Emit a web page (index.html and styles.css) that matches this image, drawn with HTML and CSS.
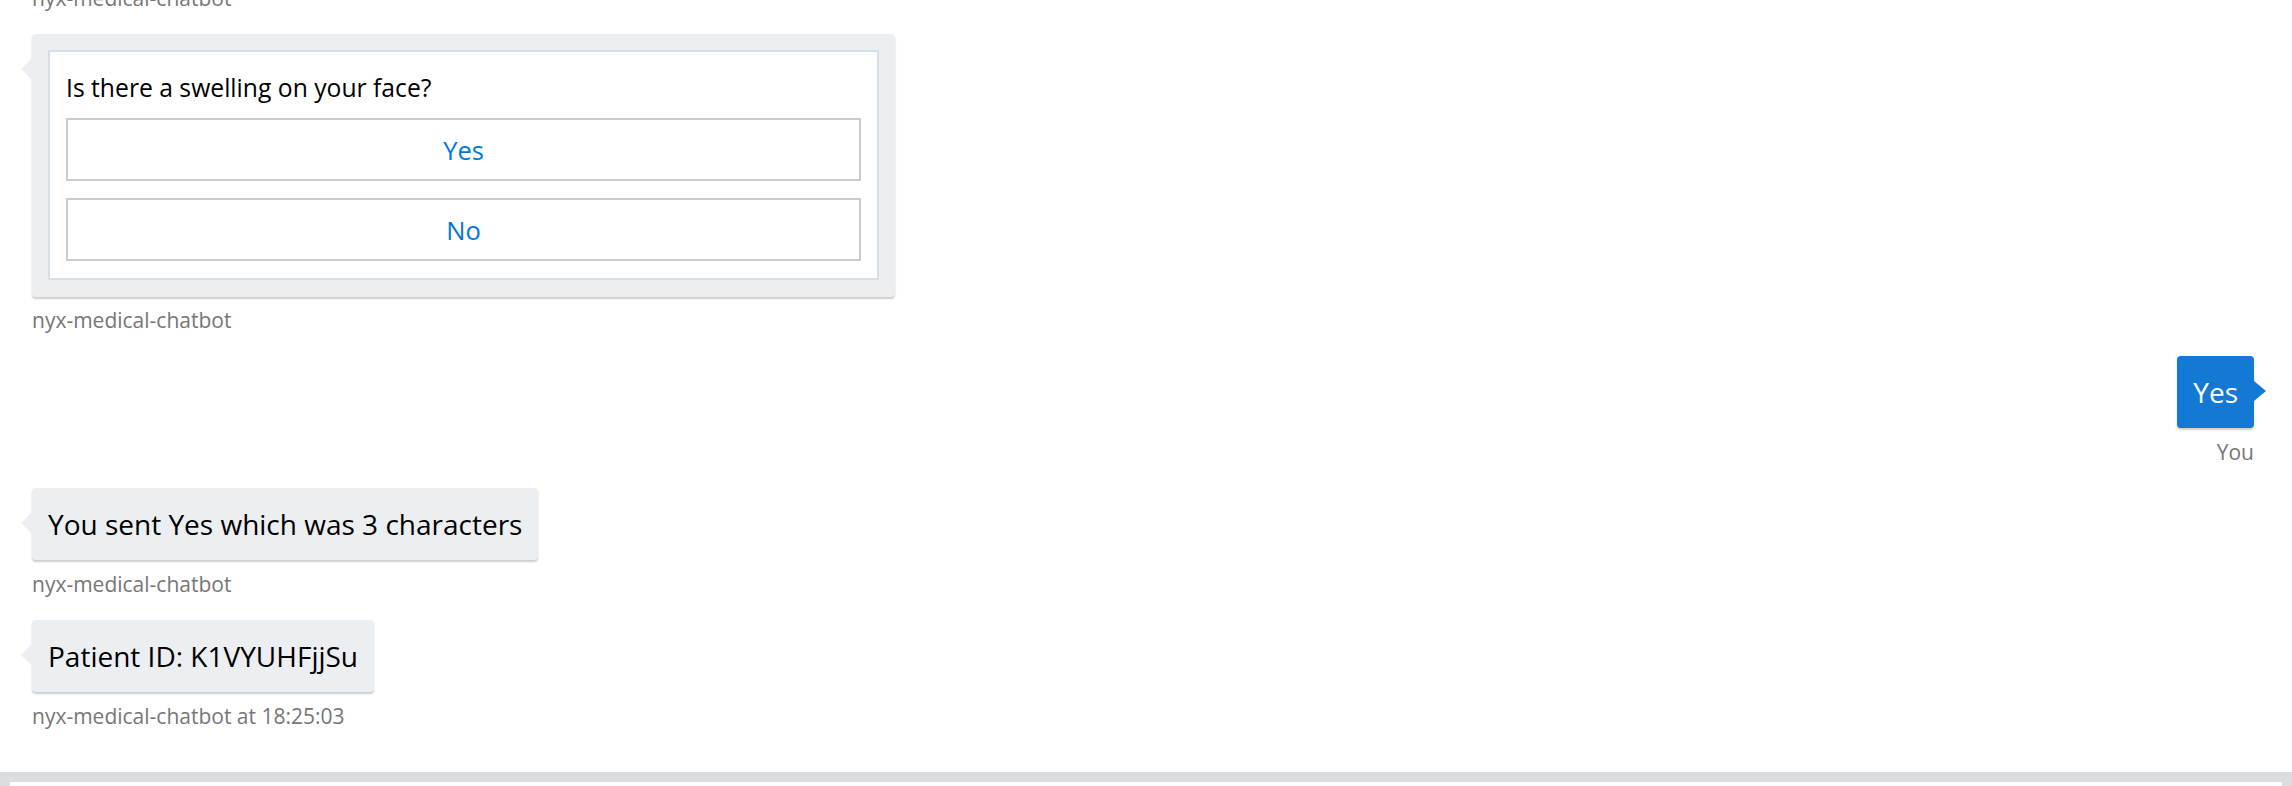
FILE: index.html
```html
<!DOCTYPE html>
<html lang="en">
<head>
<meta charset="utf-8">
<title>nyx-medical-chatbot</title>
<link rel="stylesheet" href="styles.css">
</head>
<body>
<div class="chat">
  <div class="messages">
    <div class="msg bot">
      <div class="from">nyx-medical-chatbot</div>
    </div>
    <div class="msg bot">
      <div class="bubble card-bubble">
        <div class="card">
          <div class="question">Is there a swelling on your face?</div>
          <div class="actions">
            <button class="action" type="button">Yes</button>
            <button class="action" type="button">No</button>
          </div>
        </div>
      </div>
      <div class="from">nyx-medical-chatbot</div>
    </div>
    <div class="msg me">
      <div class="bubble">Yes</div>
      <div class="from">You</div>
    </div>
    <div class="msg bot">
      <div class="bubble">You sent Yes which was 3 characters</div>
      <div class="from">nyx-medical-chatbot</div>
    </div>
    <div class="msg bot">
      <div class="bubble">Patient ID: K1VYUHFjjSu</div>
      <div class="from">nyx-medical-chatbot at 18:25:03</div>
    </div>
  </div>
  <div class="console"></div>
</div>
</body>
</html>
```
FILE: styles.css
```css
html, body {
  margin: 0;
  padding: 0;
  overflow: hidden;
  background: #ffffff;
}

body {
  font-family: "Open Sans", "Noto Sans", "DejaVu Sans", sans-serif;
  color: #000000;
}

.chat {
  height: 872px;
  display: flex;
  flex-direction: column;
}

.messages {
  flex: 1 1 auto;
  min-height: 0;
  overflow: hidden;
  display: flex;
  flex-direction: column;
  justify-content: flex-end;
  gap: 21px;
  padding: 0 38px 41px 32px;
}

.msg {
  display: flex;
  flex-direction: column;
  align-items: flex-start;
  flex: none;
}

.msg.me {
  align-items: flex-end;
}

.bubble {
  position: relative;
  box-sizing: border-box;
  background: #eceff1;
  border-radius: 4px;
  box-shadow: 0 2px 2px 0 rgba(0, 0, 0, 0.2);
  padding: 16px;
  font-size: 28px;
  line-height: 40px;
  white-space: nowrap;
}

.bubble::before {
  content: "";
  position: absolute;
  top: 24px;
  left: -11px;
  width: 11px;
  height: 22px;
  background: #eceff1;
  clip-path: polygon(100% 0, 0 50%, 100% 100%);
}

.me .bubble {
  background: #1479d4;
  color: #ffffff;
}

.me .bubble::before {
  left: auto;
  right: -12px;
  top: 25px;
  width: 12px;
  height: 20px;
  background: #1479d4;
  clip-path: polygon(0 0, 100% 50%, 0 100%);
}

.from {
  margin-top: 10px;
  font-size: 21px;
  line-height: 29px;
  color: #767676;
  white-space: nowrap;
}

.card-bubble {
  width: 863px;
  padding: 16px 16px 17px 16px;
  margin-bottom: -1px;
}

.card {
  background: #ffffff;
  border: 2px solid #d6dfe6;
  padding: 18px 16px 17px 16px;
}

.question {
  font-size: 24.7px;
  line-height: 35px;
  color: #000000;
}

.actions {
  display: flex;
  flex-direction: column;
  gap: 17px;
  margin-top: 13px;
}

.action {
  display: flex;
  align-items: center;
  justify-content: center;
  box-sizing: border-box;
  height: 63px;
  width: 100%;
  margin: 0;
  padding: 0;
  background: #ffffff;
  border: 2px solid #cccccc;
  border-radius: 0;
  font-family: inherit;
  font-size: 25.5px;
  color: #0078d7;
  cursor: pointer;
}

.console {
  flex: none;
  box-sizing: border-box;
  height: 100px;
  border: 10px solid #dbdee1;
  background: #ffffff;
}
```
